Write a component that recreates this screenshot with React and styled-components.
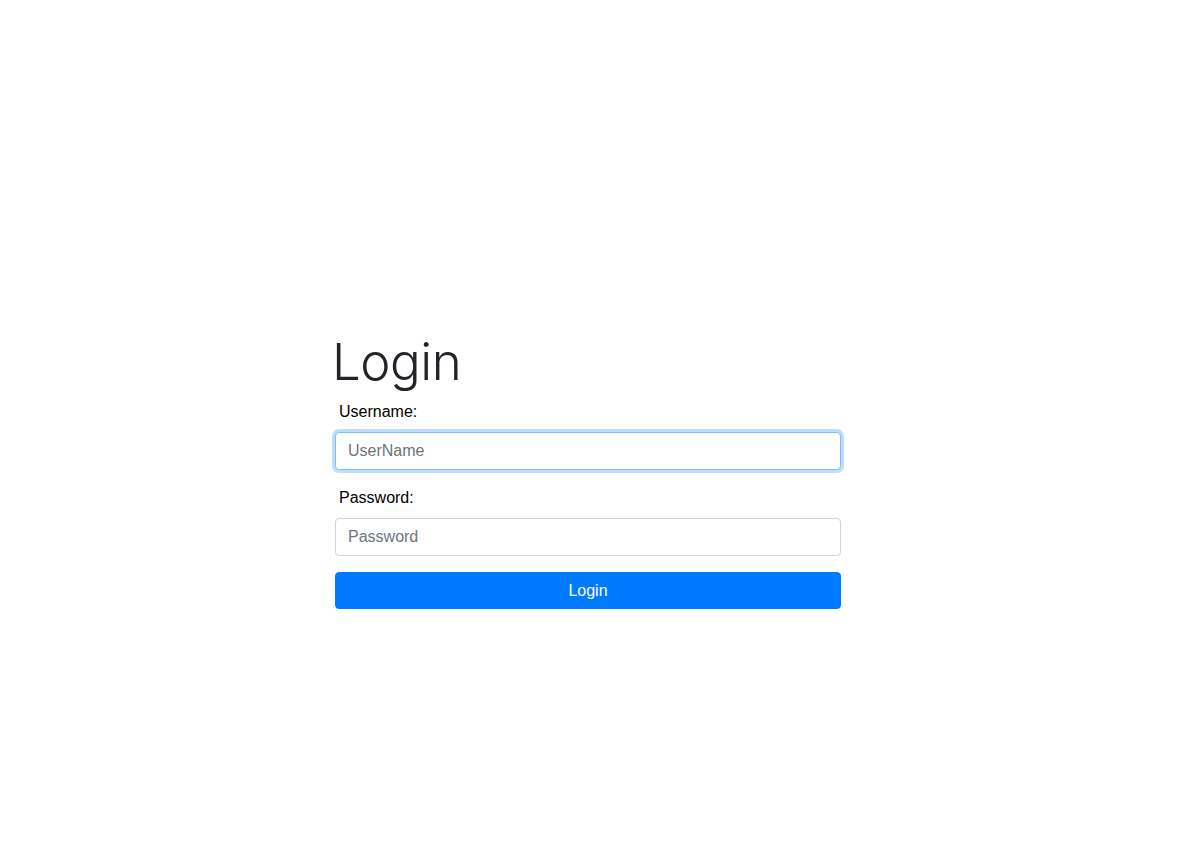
import React from 'react';
import styled, { createGlobalStyle } from 'styled-components';

const GlobalStyle = createGlobalStyle`
  html, body {
    margin: 0;
    padding: 0;
    background: #fff;
    font-family: "Liberation Sans", Arial, sans-serif;
    color: #212529;
  }
  * {
    box-sizing: border-box;
  }
`;

const Page = styled.div`
  min-height: 858px;
  padding: 333px 0 0 335px;
`;

const LoginForm = styled.form`
  display: flex;
  flex-direction: column;
  width: 506px;
`;

const LoginHeading = styled.h1`
  margin: 0 0 9px -3px;
  font-family: Inter, "Liberation Sans", sans-serif;
  font-weight: 300;
  font-size: 51px;
  line-height: 58px;
  letter-spacing: -0.5px;
  color: #212529;
`;

const FormGroup = styled.div`
  display: flex;
  flex-direction: column;
  margin-bottom: 16px;
`;

const Label = styled.label`
  margin: 0 0 8px 4px;
  font-size: 16px;
  line-height: 24px;
  color: #000;
`;

const Input = styled.input`
  height: 38px;
  padding: 6px 12px;
  font-family: "Liberation Sans", Arial, sans-serif;
  font-size: 16px;
  color: #495057;
  background: #fff;
  border: 1px solid #ced4da;
  border-radius: 4px;
  outline: none;

  &::placeholder {
    color: #6c757d;
  }

  &:focus {
    border-color: #80bdff;
    box-shadow: 0 0 0 3px rgba(0, 123, 255, 0.25);
  }
`;

const LoginButton = styled.button`
  height: 37px;
  padding: 6px 12px;
  font-family: "Liberation Sans", Arial, sans-serif;
  font-size: 16px;
  color: #fff;
  background: #007bff;
  border: 1px solid #007bff;
  border-radius: 4px;
  cursor: pointer;
`;

const App = () => {
  return (
    <Page>
      <GlobalStyle />
      <LoginForm onSubmit={(e) => e.preventDefault()}>
        <LoginHeading>Login</LoginHeading>
        <FormGroup>
          <Label htmlFor="username">Username:</Label>
          <Input id="username" type="text" placeholder="UserName" autoFocus />
        </FormGroup>
        <FormGroup>
          <Label htmlFor="password">Password:</Label>
          <Input id="password" type="password" placeholder="Password" />
        </FormGroup>
        <LoginButton type="submit">Login</LoginButton>
      </LoginForm>
    </Page>
  );
};

export default App;
